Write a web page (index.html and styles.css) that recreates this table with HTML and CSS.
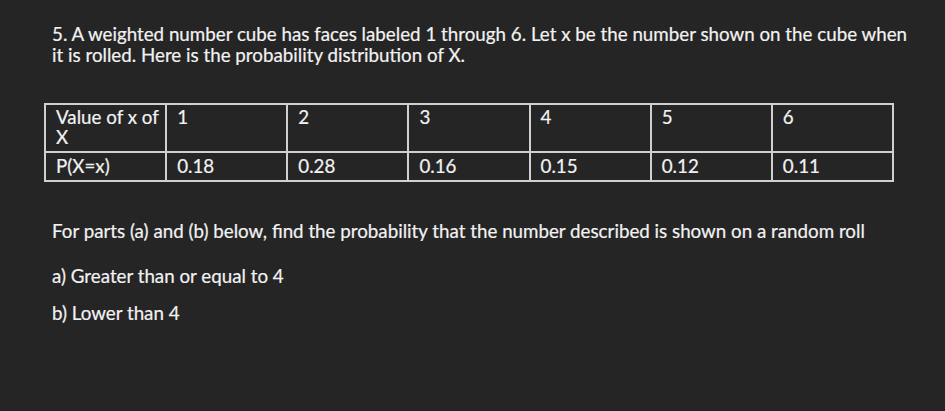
FILE: index.html
```html
<!DOCTYPE html>
<html>
<head>
<meta charset="utf-8">
<link rel="stylesheet" href="styles.css">
</head>
<body>
<div class="page">
  <p class="intro">5. A weighted number cube has faces labeled 1 through 6. Let x be the number shown on the cube when it is rolled. Here is the probability distribution of X.</p>
  <table class="dist">
    <tr class="row-top">
      <td class="label">Value of x of X</td><td>1</td><td>2</td><td>3</td><td>4</td><td>5</td><td>6</td>
    </tr>
    <tr class="row-bottom">
      <td class="label">P(X=x)</td><td>0.18</td><td>0.28</td><td>0.16</td><td>0.15</td><td>0.12</td><td>0.11</td>
    </tr>
  </table>
  <p class="parts">For parts (a) and (b) below, find the probability that the number described is shown on a random roll</p>
  <p class="part-a">a) Greater than or equal to 4</p>
  <p class="part-b">b) Lower than 4</p>
</div>
</body>
</html>
```
FILE: styles.css
```css
html, body {
  margin: 0;
  padding: 0;
  background: #252525;
}
body {
  width: 945px;
  height: 411px;
  overflow: hidden;
  font-family: Lato, "Open Sans", sans-serif;
  color: #f2f2f2;
  font-size: 18.75px;
  -webkit-text-stroke: 0.2px #f2f2f2;
}
.page {
  padding: 23px 0 0 52px;
}
.intro {
  margin: 0;
  width: 860px;
  line-height: 21px;
}
.dist {
  margin: 38px 0 0 -8px;
  border-collapse: collapse;
  table-layout: fixed;
  width: 850px;
  border: 2px solid #d0d0d0;
}
.dist td {
  border: 2px solid #d0d0d0;
  vertical-align: top;
  padding: 2px 9px 4px 10px;
  line-height: 20px;
}
.dist .row-bottom td {
  padding: 3px 9px 4px 10px;
}
.dist td.label {
  padding-right: 1px;
}
.parts {
  margin: 37px 0 0 0;
}
.part-a {
  margin: 22px 0 0 0;
}
.part-b {
  margin: 14px 0 0 0;
}
```
